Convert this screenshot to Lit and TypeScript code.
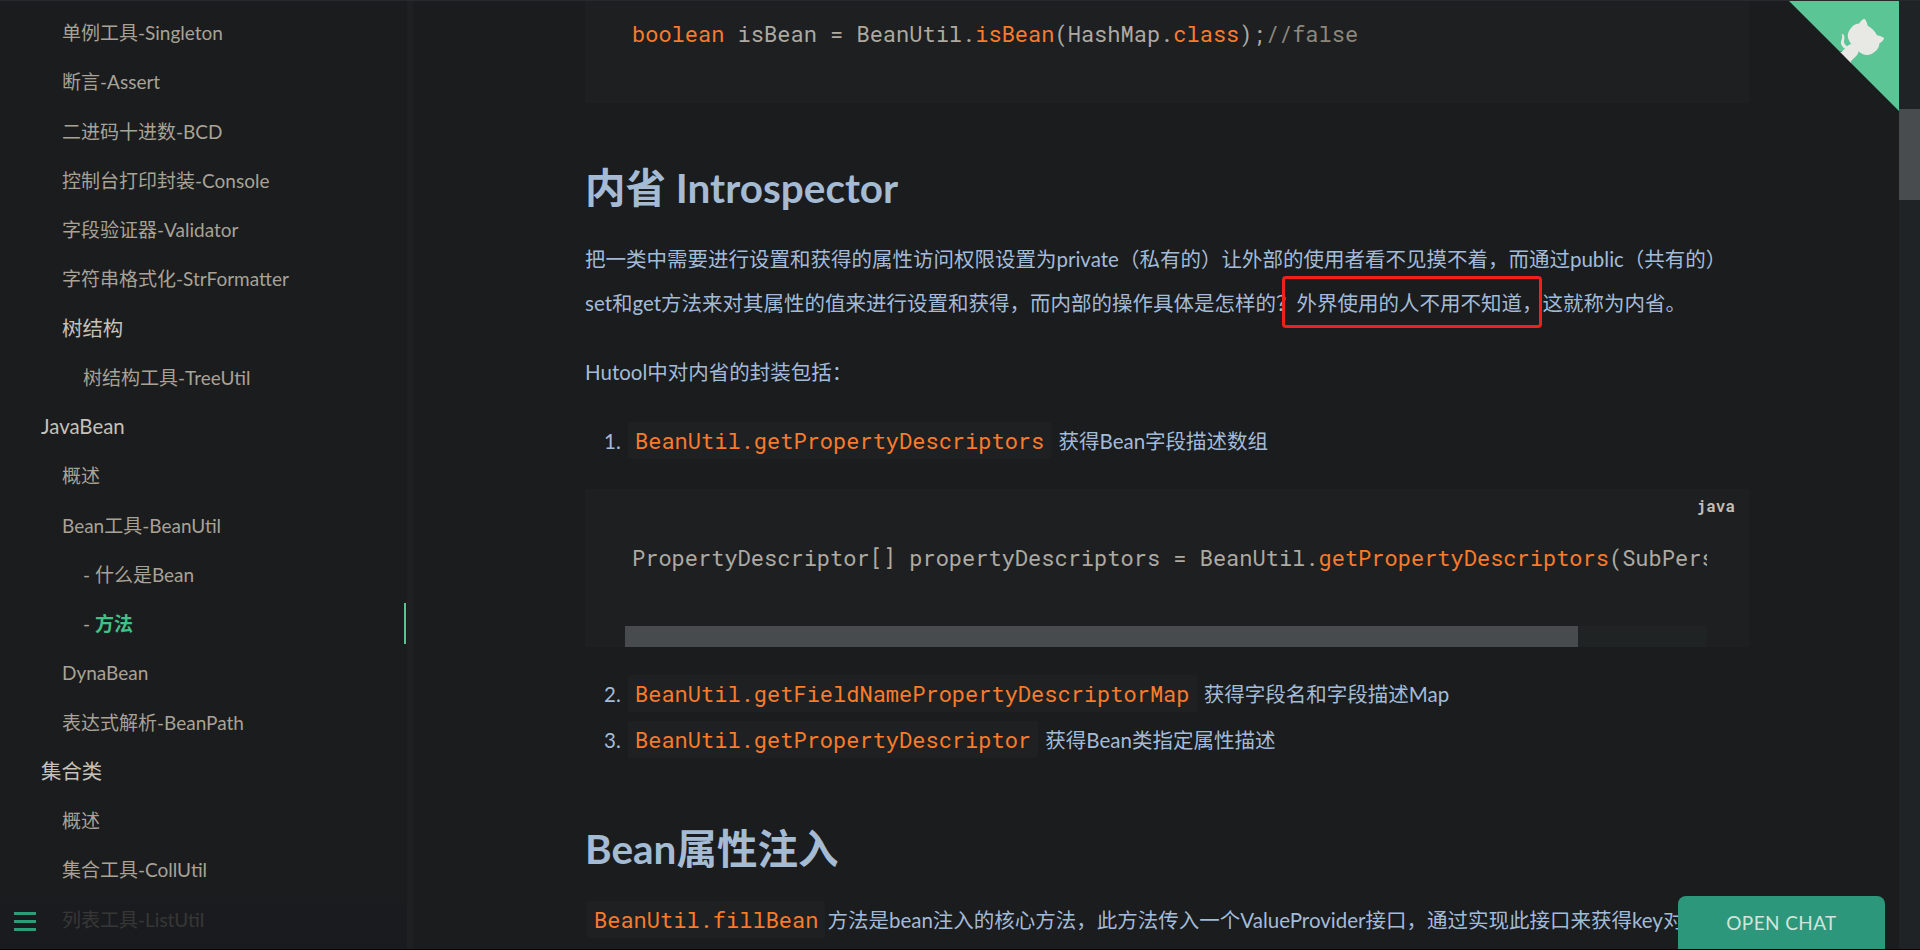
import { LitElement, html, css } from "lit";
import { customElement } from "lit/decorators.js";

const NAV = [
  { level: 2, text: "单例工具-Singleton" },
  { level: 2, text: "断言-Assert" },
  { level: 2, text: "二进码十进数-BCD" },
  { level: 2, text: "控制台打印封装-Console" },
  { level: 2, text: "字段验证器-Validator" },
  { level: 2, text: "字符串格式化-StrFormatter" },
  { level: 2, text: "树结构", group: true },
  { level: 3, text: "树结构工具-TreeUtil" },
  { level: 1, text: "JavaBean", group: true },
  { level: 2, text: "概述" },
  { level: 2, text: "Bean工具-BeanUtil" },
  { level: 3, text: "- 什么是Bean" },
  { level: 3, text: "- ", active: "方法" },
  { level: 2, text: "DynaBean" },
  { level: 2, text: "表达式解析-BeanPath" },
  { level: 1, text: "集合类", group: true },
  { level: 2, text: "概述" },
  { level: 2, text: "集合工具-CollUtil" },
  { level: 2, text: "列表工具-ListUtil" },
];

@customElement("app-root")
export class AppRoot extends LitElement {
  static styles = css`
    :host {
      display: block;
    }
    .page {
      position: relative;
      display: flex;
      box-sizing: border-box;
      height: 950px;
      overflow: hidden;
      background: #1a1c1e;
      border-top: 1px solid #27292c;
      border-bottom: 1px solid #050505;
      font-family: Lato, "Noto Sans CJK SC", "Noto Sans", sans-serif;
    }

    /* sidebar */
    .sidebar {
      position: relative;
      flex: none;
      width: 407px;
      padding-top: 7px;
      overflow: hidden;
      font-size: 19px;
      line-height: 49.25px;
      color: #a9a296;
    }
    .item {
      white-space: nowrap;
    }
    .l1 {
      padding-left: 41px;
    }
    .l2 {
      padding-left: 62px;
    }
    .l3 {
      padding-left: 83px;
    }
    .group {
      font-size: 20.4px;
      color: #c6c2ba;
    }
    .active {
      position: relative;
    }
    .active b {
      color: #42c088;
      font-weight: 700;
    }
    .active::after {
      content: "";
      position: absolute;
      right: 1px;
      top: 4px;
      width: 2px;
      height: 41px;
      background: #55c592;
    }
    .toggle {
      position: absolute;
      left: 0;
      right: 0;
      bottom: 0;
      height: 46px;
      background: rgba(26, 28, 30, 0.8);
    }
    .burger {
      position: absolute;
      left: 14px;
      top: 9px;
      display: flex;
      flex-direction: column;
      gap: 5px;
    }
    .burger span {
      display: block;
      width: 22px;
      height: 3px;
      background: #2f9c78;
    }
    .side-track {
      flex: none;
      width: 6px;
      background: #1e2022;
    }

    /* main column */
    .main {
      flex: 1;
      min-width: 0;
      padding-left: 172px;
      overflow: hidden;
    }
    .content {
      width: 1164px;
      font-size: 20.5px;
      line-height: 44px;
      color: #a3bbd8;
    }
    h2 {
      margin: 60px 0 0;
      font-size: 40.5px;
      line-height: 50px;
      font-weight: 700;
      color: #a5bbd4;
    }
    h2.next {
      margin-top: 61px;
    }
    p {
      margin: 24px 0 0;
    }
    p.tight {
      margin-top: 25px;
      white-space: nowrap;
    }
    .mono,
    code {
      font-family: "Roboto Mono", "DejaVu Sans Mono", monospace;
      font-size: 22px;
    }
    code {
      margin: 0 2px;
      padding: 4px 7px;
      background: #1e2022;
      border-radius: 2px;
      color: #fa7b2a;
    }
    .kw {
      color: #fa7b2a;
    }
    .cm {
      color: #8d877c;
    }
    .pre {
      background: #1d1f21;
      color: #aeaaa2;
      line-height: 30px;
      white-space: pre;
    }
    .pre-first {
      height: 84px;
      padding: 18px 0 0 47px;
    }
    .pre-scroll {
      position: relative;
      display: flex;
      flex-direction: column;
      height: 158px;
      margin-top: 26px;
      padding-left: 40px;
      padding-right: 42px;
    }
    .lang {
      position: absolute;
      top: 5px;
      right: 14px;
      font-size: 16px;
      line-height: 24px;
      font-weight: 700;
      color: #c2bdb5;
    }
    .pre-line {
      flex: 1;
      padding: 54px 0 0 7px;
      overflow: hidden;
    }
    .track {
      flex: none;
      height: 21px;
      background: #1f2324;
    }
    .thumb {
      width: 953px;
      height: 21px;
      background: #474b4d;
    }
    ol {
      margin: 25px 0 0;
      padding: 0 0 0 41px;
      line-height: 44px;
    }
    ol.rest {
      margin-top: 24px;
      line-height: 45px;
    }
    .mark {
      position: relative;
    }
    .mark::after {
      content: "";
      position: absolute;
      left: -15px;
      right: 1px;
      top: -15px;
      bottom: -13px;
      border: 3px solid #f2201a;
      border-radius: 4px;
    }
    .clip {
      white-space: nowrap;
    }

    /* page scrollbar */
    .page-track {
      flex: none;
      width: 21px;
      padding-top: 108px;
      background: #1f2325;
    }
    .page-thumb {
      height: 91px;
      background: #484c4e;
    }

    /* overlays */
    .corner {
      position: absolute;
      top: 0;
      right: 21px;
      width: 110px;
      height: 110px;
      fill: #5bc595;
      color: #e8e8e4;
    }
    .chat {
      position: absolute;
      right: 35px;
      bottom: 0;
      width: 207px;
      height: 53px;
      display: flex;
      align-items: center;
      justify-content: center;
      background: #2c977b;
      border-radius: 8px 8px 0 0;
      font-size: 19px;
      letter-spacing: 0.4px;
      color: #d3e4dc;
    }
  `;

  render() {
    return html`
      <div class="page">
        <nav class="sidebar">
          ${NAV.map(
            (n) => html`<div
              class="item l${n.level} ${n.group ? "group" : ""} ${n.active
                ? "active"
                : ""}"
            >
              ${n.text}${n.active ? html`<b>${n.active}</b>` : ""}
            </div>`,
          )}
          <div class="toggle">
            <div class="burger"><span></span><span></span><span></span></div>
          </div>
        </nav>
        <div class="side-track"></div>
        <main class="main">
          <div class="content">
            <div class="pre pre-first mono"><span class="kw">boolean</span> isBean = BeanUtil.<span class="kw">isBean</span>(HashMap.<span class="kw">class</span>);<span class="cm">//false</span></div>
            <h2>内省 Introspector</h2>
            <p>
              把一类中需要进行设置和获得的属性访问权限设置为private（私有的）让外部的使用者看不见摸不着，而通过public（共有的）
              set和get方法来对其属性的值来进行设置和获得，而内部的操作具体是怎样的？<span class="mark">外界使用的人不用不知道，</span>这就称为内省。
            </p>
            <p class="tight">Hutool中对内省的封装包括：</p>
            <ol>
              <li><code>BeanUtil.getPropertyDescriptors</code> 获得Bean字段描述数组</li>
            </ol>
            <div class="pre pre-scroll mono">
              <span class="lang">java</span>
              <div class="pre-line">PropertyDescriptor[] propertyDescriptors = BeanUtil.<span class="kw">getPropertyDescriptors</span>(SubPerson.<span class="kw">class</span>);</div>
              <div class="track"><div class="thumb"></div></div>
            </div>
            <ol class="rest" start="2">
              <li><code>BeanUtil.getFieldNamePropertyDescriptorMap</code> 获得字段名和字段描述Map</li>
              <li><code>BeanUtil.getPropertyDescriptor</code> 获得Bean类指定属性描述</li>
            </ol>
            <h2 class="next">Bean属性注入</h2>
            <p class="clip">
              <code>BeanUtil.fillBean</code>方法是bean注入的核心方法，此方法传入一个ValueProvider接口，通过实现此接口来获得key对应的值
            </p>
          </div>
        </main>
        <div class="page-track"><div class="page-thumb"></div></div>
        <svg class="corner" viewBox="0 0 250 250" aria-hidden="true">
          <path d="M0,0 L115,115 L130,115 L142,142 L250,250 L250,0 Z"></path>
          <path
            fill="currentColor"
            d="M128.3,109.0 C113.8,99.7 119.0,89.6 119.0,89.6 C122.0,82.7 120.5,78.6 120.5,78.6 C119.2,72.0 123.4,76.3 123.4,76.3 C127.3,80.9 125.5,87.3 125.5,87.3 C122.9,97.6 130.6,101.9 134.4,103.2"
          ></path>
          <path
            fill="currentColor"
            d="M115.0,115.0 C114.9,115.1 118.7,116.5 119.8,115.4 L133.7,101.6 C136.9,99.2 139.9,98.4 142.2,98.6 C133.8,88.0 127.5,74.4 143.8,58.0 C148.5,53.4 154.0,51.2 159.7,51.0 C160.3,49.4 163.2,43.6 171.4,40.1 C171.4,40.1 176.1,42.5 178.8,56.2 C183.1,58.6 187.2,61.8 190.9,65.4 C194.5,69.0 197.7,73.2 200.1,77.6 C213.8,80.2 216.3,84.9 216.3,84.9 C212.7,93.1 206.9,96.0 205.4,96.6 C205.1,102.4 203.0,107.8 198.3,112.5 C181.9,128.9 168.3,122.5 157.7,114.1 C157.9,116.9 156.7,120.9 152.7,124.9 L141.0,136.5 C139.8,137.7 141.6,141.9 141.8,141.8 Z"
          ></path>
        </svg>
        <div class="chat">OPEN CHAT</div>
      </div>
    `;
  }
}

declare global {
  interface HTMLElementTagNameMap {
    "app-root": AppRoot;
  }
}
